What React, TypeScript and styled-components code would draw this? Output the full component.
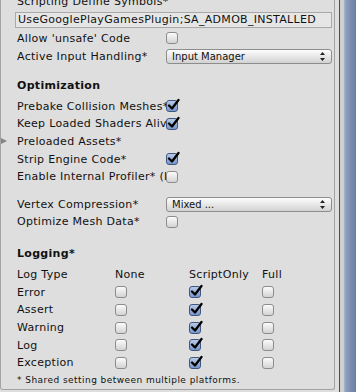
import React from "react";
import styled, { createGlobalStyle, css } from "styled-components";

const Global = createGlobalStyle`
  html, body { margin: 0; padding: 0; background: #dedede; }
  body { font-family: "DejaVu Sans", "Liberation Sans", sans-serif; color: #111; }
`;

const Screen = styled.div`
  display: flex;
  width: 356px;
  height: 392px;
  overflow: hidden;
  background: #dedede;
`;

const Panel = styled.div`
  width: 335px;
  height: 390px;
  box-sizing: border-box;
  border: 1px solid #a3a3a3;
  border-top: none;
  border-radius: 0 0 3px 3px;
  overflow: hidden;
  padding: 0 0 0 16px;
  font-size: 11px;
  letter-spacing: 0.3px;
`;

const Gutter = styled.div`
  width: 4px;
`;

const Divider = styled.div`
  width: 1px;
  background: #4c4c4c;
`;

const Track = styled.div`
  width: 4px;
  background: #cfcfcf;
`;

const Scrollbar = styled.div`
  flex: 1;
  background: linear-gradient(to right, #a9b6cc 0, #8d9fbd 2px, #7d90b2 50%, #6a7ea4 100%);
`;

const Row = styled.div<{ $mt?: number }>`
  display: flex;
  align-items: center;
  height: 17.6px;
  margin-top: ${(p) => p.$mt ?? 0}px;
  position: relative;
`;

const Label = styled.div`
  width: 149px;
  flex: none;
  white-space: nowrap;
  overflow: hidden;
`;

const Header = styled.div<{ $mt: number; $mb?: number }>`
  font-weight: bold;
  height: 17.6px;
  line-height: 17.6px;
  margin-top: ${(p) => p.$mt}px;
  margin-bottom: ${(p) => p.$mb ?? 0}px;
`;

const TopLabel = styled.div`
  height: 17.6px;
  line-height: 17.6px;
  margin-top: -6.8px;
`;

const TextField = styled.div`
  margin: 1.2px 0 0 -2px;
  width: 317px;
  height: 16px;
  box-sizing: border-box;
  border: 1px solid #a9a9a9;
  background: #e6e6e6;
  padding-left: 2px;
  line-height: 14px;
  white-space: nowrap;
  overflow: hidden;
`;

const Box = styled.span<{ $on?: boolean }>`
  position: relative;
  display: inline-block;
  flex: none;
  width: 12px;
  height: 12px;
  box-sizing: border-box;
  border-radius: 3px;
  ${(p) =>
    p.$on
      ? css`
          border: 1px solid #3f5680;
          background: linear-gradient(#b7c9e6, #7796cc);
        `
      : css`
          border: 1px solid #8c8c8c;
          background: linear-gradient(#fbfbfb, #d3d3d3);
        `}
`;

const Check = styled.svg`
  position: absolute;
  left: 0px;
  top: -3px;
  width: 13px;
  height: 13px;
`;

const Toggle = ({ on }: { on?: boolean }) => (
  <Box $on={on}>
    {on && (
      <Check viewBox="0 0 13 13">
        <path d="M2 7.5 L5 10.5 L11.5 2" fill="none" stroke="#000" strokeWidth="2.3" strokeLinecap="round" strokeLinejoin="round" />
      </Check>
    )}
  </Box>
);

const Select = styled.div`
  display: flex;
  align-items: center;
  justify-content: space-between;
  width: 166px;
  height: 15px;
  box-sizing: border-box;
  border: 1px solid #8d8d8d;
  border-radius: 3px;
  background: linear-gradient(#fdfdfd, #d2d2d2);
  padding: 0 6px 0 5px;
  font-size: 10px;
  letter-spacing: 0;
`;

const Arrows = () => (
  <svg width="5" height="9" viewBox="0 0 5 9">
    <path d="M2.5 0 L5 3 L0 3 Z M2.5 9 L5 6 L0 6 Z" fill="#222" />
  </svg>
);

const Disclosure = styled.span`
  position: absolute;
  left: -16px;
  top: 5px;
  width: 0;
  height: 0;
  border-top: 3.5px solid transparent;
  border-bottom: 3.5px solid transparent;
  border-left: 6px solid #858585;
`;

const LogGrid = styled.div`
  display: grid;
  grid-template-columns: 98px 74px 73px auto;
  grid-auto-rows: 17.6px;
  align-items: center;
  margin-top: 3.4px;
`;

const Cell = styled.div`
  display: flex;
  align-items: center;
  white-space: nowrap;
`;

const Footnote = styled.div`
  font-size: 9px;
  letter-spacing: 0.45px;
  height: 17.6px;
  line-height: 17.6px;
  margin-top: 0.5px;
`;

const logs = ["Error", "Assert", "Warning", "Log", "Exception"];

export default function App() {
  return (
    <>
      <Global />
      <Screen>
        <Panel>
          <TopLabel>Scripting Define Symbols*</TopLabel>
          <TextField>UseGooglePlayGamesPlugin;SA_ADMOB_INSTALLED</TextField>
          <Row $mt={1.7}>
            <Label>Allow 'unsafe' Code</Label>
            <Toggle />
          </Row>
          <Row>
            <Label>Active Input Handling*</Label>
            <Select>
              <span>Input Manager</span>
              <Arrows />
            </Select>
          </Row>
          <Header $mt={12.4} $mb={2.6}>Optimization</Header>
          <Row>
            <Label>Prebake Collision Meshes*</Label>
            <Toggle on />
          </Row>
          <Row>
            <Label>Keep Loaded Shaders Alive*</Label>
            <Toggle on />
          </Row>
          <Row>
            <Disclosure />
            <Label>Preloaded Assets*</Label>
          </Row>
          <Row>
            <Label>Strip Engine Code*</Label>
            <Toggle on />
          </Row>
          <Row>
            <Label>Enable Internal Profiler* (Deprecated)</Label>
            <Toggle />
          </Row>
          <Row $mt={10}>
            <Label>Vertex Compression*</Label>
            <Select>
              <span>Mixed ...</span>
              <Arrows />
            </Select>
          </Row>
          <Row>
            <Label>Optimize Mesh Data*</Label>
            <Toggle />
          </Row>
          <Header $mt={14.4}>Logging*</Header>
          <LogGrid>
            <Cell>Log Type</Cell>
            <Cell>None</Cell>
            <Cell>ScriptOnly</Cell>
            <Cell>Full</Cell>
            {logs.map((l) => (
              <React.Fragment key={l}>
                <Cell>{l}</Cell>
                <Cell><Toggle /></Cell>
                <Cell><Toggle on /></Cell>
                <Cell><Toggle /></Cell>
              </React.Fragment>
            ))}
          </LogGrid>
          <Footnote>* Shared setting between multiple platforms.</Footnote>
        </Panel>
        <Gutter />
        <Divider />
        <Track />
        <Scrollbar />
      </Screen>
    </>
  );
}
